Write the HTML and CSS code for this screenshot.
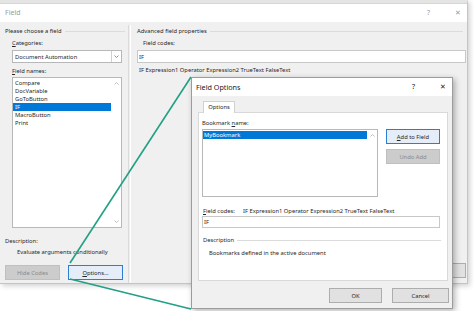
FILE: index.html
```html
<!DOCTYPE html>
<html lang="en">
<head>
    <meta charset="UTF-8">
    <title>Field</title>
    <link rel="stylesheet" href="styles.css">
</head>
<body>
    <div class="screen">
        <div class="field-dialog">
            <div class="titlebar">
                <span class="title">Field</span>
                <span class="help">?</span>
                <span class="close">&#x2715;</span>
            </div>
            <div class="dialog-body">
                <div class="left-pane">
                    <div class="group-head">Please choose a field</div>
                    <div class="label"><u>C</u>ategories:</div>
                    <div class="combo">
                        <span class="combo-text">Document Automation</span>
                        <span class="combo-arrow">
                            <svg width="5" height="3" viewBox="0 0 5 3"><polyline points="0.5,0.5 2.5,2.5 4.5,0.5" fill="none" stroke="#777" stroke-width="0.8"/></svg>
                        </span>
                    </div>
                    <div class="label"><u>F</u>ield names:</div>
                    <div class="listbox field-list">
                        <ul class="items">
                            <li>Compare</li>
                            <li>DocVariable</li>
                            <li>GoToButton</li>
                            <li class="selected">IF</li>
                            <li>MacroButton</li>
                            <li>Print</li>
                        </ul>
                        <div class="scrollbar">
                            <svg width="5" height="3" viewBox="0 0 5 3"><polyline points="0.5,2.5 2.5,0.5 4.5,2.5" fill="none" stroke="#b0b0b0" stroke-width="0.8"/></svg>
                            <svg width="5" height="3" viewBox="0 0 5 3"><polyline points="0.5,0.5 2.5,2.5 4.5,0.5" fill="none" stroke="#b0b0b0" stroke-width="0.8"/></svg>
                        </div>
                    </div>
                    <div class="desc-label">Description:</div>
                    <div class="desc-text">Evaluate arguments conditionally</div>
                    <div class="button-row">
                        <button class="btn disabled hide-codes">Hide Codes</button>
                        <button class="btn focused options-btn"><u>O</u>ptions...</button>
                    </div>
                </div>
                <div class="divider"></div>
                <div class="right-pane">
                    <div class="group-head">Advanced field properties</div>
                    <div class="label indent">Field codes;</div>
                    <div class="textbox">IF</div>
                    <div class="syntax">IF Expression1 Operator Expression2 TrueText FalseText</div>
                    <div class="button-row end">
                        <button class="btn">OK</button>
                        <button class="btn">Cancel</button>
                    </div>
                </div>
            </div>
        </div>

        <svg class="callout-lines" width="474" height="311" viewBox="0 0 474 311">
            <line x1="70" y1="263" x2="191" y2="77" stroke="#22a085" stroke-width="1.6"/>
            <line x1="70" y1="279" x2="191" y2="309" stroke="#22a085" stroke-width="1.6"/>
        </svg>

        <div class="options-dialog">
            <div class="titlebar active">
                <span class="title">Field Options</span>
                <span class="help">?</span>
                <span class="close">&#x2715;</span>
            </div>
            <div class="options-body">
                <div class="tab">Options</div>
                <div class="tab-panel">
                    <div class="label"><span>Bookmark <u>n</u>ame:</span></div>
                    <div class="bookmark-row">
                        <div class="listbox bookmark-list">
                            <ul class="items">
                                <li class="selected">MyBookmark</li>
                            </ul>
                            <div class="scrollbar">
                                <svg width="5" height="3" viewBox="0 0 5 3"><polyline points="0.5,2.5 2.5,0.5 4.5,2.5" fill="none" stroke="#b0b0b0" stroke-width="0.8"/></svg>
                            </div>
                        </div>
                        <div class="side-buttons">
                            <button class="btn focused"><u>A</u>dd to Field</button>
                            <button class="btn disabled">Undo Add</button>
                        </div>
                    </div>
                    <div class="codes-line"><span class="codes-label"><u>F</u>ield codes:</span><span class="codes-syntax">IF Expression1 Operator Expression2 TrueText FalseText</span></div>
                    <div class="textbox codes-box">IF</div>
                    <div class="group-head desc-head">Description</div>
                    <div class="bookmark-desc">Bookmarks defined in the active document</div>
                </div>
                <div class="button-row end footer">
                    <button class="btn">OK</button>
                    <button class="btn cancel">Cancel</button>
                </div>
            </div>
        </div>
    </div>
</body>
</html>
```

FILE: styles.css
```css
* {
    box-sizing: border-box;
}
body {
    margin: 0;
    background: #fff;
    font-family: "Noto Sans", "Open Sans", sans-serif;
    font-size: 5.8px;
    line-height: 8px;
    color: #262626;
}
u {
    text-decoration: underline;
    text-underline-offset: 1px;
}
.screen {
    position: relative;
    width: 474px;
    height: 311px;
    overflow: hidden;
}

/* outer "Field" window */
.field-dialog {
    width: 468px;
    height: 284px;
    background: #f0f0f0;
    border-top: 3px solid #e4e4e4;
    border-right: 1px solid #c4c4c4;
    border-bottom: 1px solid #c4c4c4;
    box-shadow: 2px 2px 5px rgba(0, 0, 0, 0.18);
    display: flex;
    flex-direction: column;
}
.titlebar {
    height: 19px;
    background: #fff;
    border-top: 1px solid #d6d6d6;
    display: flex;
    align-items: center;
    color: #9a9a9a;
    font-size: 7px;
}
.titlebar .title {
    flex: 1;
    padding-left: 5px;
}
.titlebar .help {
    width: 28px;
    font-size: 7px;
}
.titlebar .close {
    width: 12px;
    font-size: 7px;
}
.dialog-body {
    flex: 1;
    display: flex;
}
.left-pane {
    width: 128px;
    padding-left: 5px;
    display: flex;
    flex-direction: column;
}
.divider {
    width: 3px;
    border-left: 1px solid #dadada;
    border-right: 1px solid #fff;
    margin-top: 3px;
}
.right-pane {
    flex: 1;
    padding-left: 6px;
    padding-right: 1px;
    display: flex;
    flex-direction: column;
}
.group-head {
    margin-top: 5px;
    display: flex;
    align-items: center;
}
.group-head::after {
    content: "";
    flex: 1;
    border-top: 1px solid #dcdcdc;
    margin-left: 3px;
    margin-right: 3px;
}
.label {
    margin-top: 4px;
    padding-left: 7px;
}
.label.indent {
    padding-left: 6px;
}
.combo {
    margin-top: 3px;
    margin-left: 7px;
    width: 110px;
    height: 13px;
    background: #fff;
    border: 1px solid #b8b8b8;
    display: flex;
    align-items: center;
}
.combo-text {
    flex: 1;
    padding-left: 2px;
}
.combo-arrow {
    width: 10px;
    height: 11px;
    border-left: 1px solid #d0d0d0;
    display: flex;
    align-items: center;
    justify-content: center;
}
.left-pane .label + .listbox {
    margin-top: 2px;
}
.listbox {
    background: #fff;
    border: 1px solid #b8b8b8;
    display: flex;
}
.field-list {
    margin-left: 7px;
    width: 110px;
    height: 151px;
}
.items {
    list-style: none;
    margin: 0;
    padding: 1px 0 0 0;
    flex: 1;
}
.items li {
    padding-left: 2px;
    height: 8px;
}
.items li.selected {
    background: #0078d7;
    color: #fff;
}
.scrollbar {
    width: 10px;
    display: flex;
    flex-direction: column;
    justify-content: space-between;
    align-items: center;
    padding: 4px 0;
}
.left-pane .label:nth-of-type(3) {
    margin-top: 3px;
}
.desc-label {
    margin-top: 9px;
}
.desc-text {
    margin-top: 3px;
    padding-left: 12px;
}
.button-row {
    margin-top: 9px;
    display: flex;
    gap: 8px;
}
.button-row.end {
    margin-top: auto;
    margin-bottom: 5px;
    justify-content: flex-end;
    gap: 10px;
}
.btn {
    font-family: inherit;
    font-size: 5.8px;
    line-height: 8px;
    color: #262626;
    height: 15px;
    width: 55px;
    padding: 0;
    background: #e1e1e1;
    border: 1px solid #adadad;
}
.btn.disabled {
    background: #cccccc;
    border-color: #bfbfbf;
    color: #8a8a8a;
}
.btn.focused {
    border-color: #2a7fd4;
    background: #e5eef8;
}
.textbox {
    margin-top: 3px;
    height: 13px;
    background: #fff;
    border: 1px solid #c8c8c8;
    padding-left: 1px;
    display: flex;
    align-items: center;
}
.syntax {
    margin-top: 3px;
    padding-left: 2px;
}

.callout-lines {
    position: absolute;
    left: 0;
    top: 0;
}

/* "Field Options" window, lying over the outer one */
.options-dialog {
    position: absolute;
    left: 191px;
    top: 77px;
    width: 262px;
    height: 232px;
    background: #f0f0f0;
    border: 1px solid #9c9c9c;
    box-shadow: 2px 2px 6px rgba(0, 0, 0, 0.3);
    display: flex;
    flex-direction: column;
}
.options-dialog .titlebar {
    height: 18px;
    border-top: 0;
    color: #1a1a1a;
    font-size: 7.2px;
}
.options-dialog .titlebar .title {
    padding-left: 4px;
}
.options-body {
    flex: 1;
    padding: 5px 3px 0 6px;
    display: flex;
    flex-direction: column;
}
.tab {
    margin-left: 5px;
    width: 32px;
    height: 12px;
    background: #fff;
    border: 1px solid #d0d0d0;
    border-bottom: 0;
    text-align: center;
    line-height: 11px;
    position: relative;
    z-index: 1;
    margin-bottom: -1px;
}
.tab-panel {
    width: 250px;
    height: 169px;
    background: #fff;
    border: 1px solid #d9d9d9;
    padding-left: 3px;
    display: flex;
    flex-direction: column;
}
.tab-panel .label {
    margin-top: 6px;
    padding-left: 0;
}
.bookmark-row {
    margin-top: 2px;
    display: flex;
}
.bookmark-list {
    width: 176px;
    height: 68px;
}
.bookmark-list .scrollbar {
    justify-content: flex-start;
}
.bookmark-list .items li {
    padding-left: 1px;
}
.side-buttons {
    margin-left: 8px;
    display: flex;
    flex-direction: column;
    gap: 5px;
}
.side-buttons .btn {
    width: 54px;
}
.codes-line {
    margin-top: 10px;
    padding-left: 1px;
    display: flex;
}
.codes-label {
    width: 40px;
}
.codes-box {
    margin-top: 1px;
    width: 238px;
    height: 12px;
}
.desc-head {
    margin-top: 8px;
    padding-left: 1px;
}
.desc-head::after {
    margin-right: 6px;
}
.bookmark-desc {
    margin-top: 5px;
    padding-left: 7px;
}
.footer {
    margin-top: 6px;
    margin-bottom: 0;
}
.footer .btn {
    width: 53px;
    height: 15px;
}
.footer .cancel {
    width: 57px;
}
```
